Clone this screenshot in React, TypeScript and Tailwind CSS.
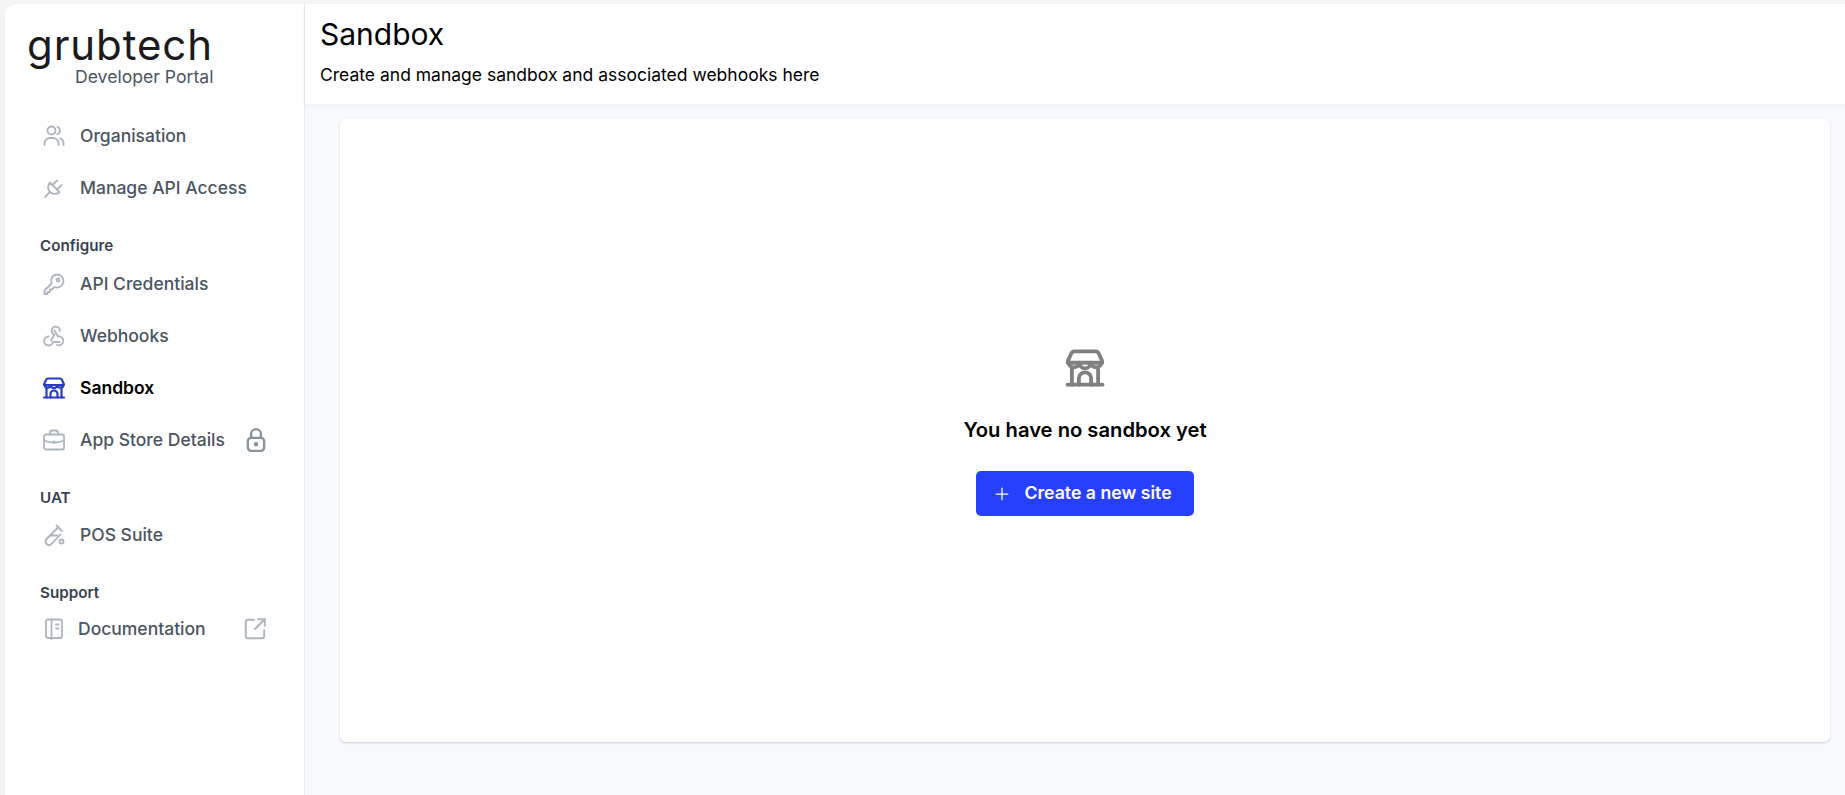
import { ReactNode } from "react";
import { Plus } from "lucide-react";

const stroke = {
  fill: "none",
  stroke: "currentColor",
  strokeWidth: 1.8,
  strokeLinecap: "round" as const,
  strokeLinejoin: "round" as const,
};

function Icon({ children, className }: { children: ReactNode; className?: string }) {
  return (
    <svg viewBox="0 0 24 24" {...stroke} className={className ?? "h-[26px] w-[26px]"}>
      {children}
    </svg>
  );
}

const UsersIcon = () => (
  <Icon>
    <circle cx="9.500" cy="6.500" r="4" />
    <path d="M15.500 2.800a4 4 0 0 1 0 7.400" />
    <path d="M2.500 21v-1.500a5.500 5.500 0 0 1 5.500-5.500h3a5.500 5.500 0 0 1 5.500 5.500V21" />
    <path d="M18 14.300a5 5 0 0 1 3.500 5V21" />
  </Icon>
);

const PlugIcon = () => (
  <Icon>
    <path d="M8 16 3 21" />
    <path d="M8 6.500 17.500 16a6.700 6.700 0 0 1-9.500-9.500z" />
    <path d="M10.500 9 15 4.500" />
    <path d="M15 13.500 19.500 9" />
  </Icon>
);

const KeyIcon = () => (
  <Icon>
    <path d="M15 2.500a6.500 6.500 0 1 1-2.500 12.500L10 17.500H8V20H5.500V22H2.500v-3.500l7-7A6.500 6.500 0 0 1 15 2.500z" />
    <circle cx="16" cy="8" r="1.500" />
  </Icon>
);

const WebhookIcon = () => (
  <Icon>
    <path d="M9 16.500l3.500-6A4 4 0 1 1 17.800 7" />
    <path d="M6.500 12.500A4.500 4.500 0 1 0 11 18h6.500" />
    <path d="M12.500 6.500l3.500 6a4.500 4.500 0 1 1-1 8.500" />
  </Icon>
);

const StoreIcon = ({ className }: { className?: string }) => (
  <svg viewBox="0 0 24 24" fill="none" stroke="currentColor" strokeWidth="2.200" strokeLinecap="round" strokeLinejoin="round" className={className}>
    <path d="M2 21.500h20" />
    <path d="M4.500 12.500v9M19.500 12.500v9" />
    <path d="M6 2.500h12a2 2 0 0 1 1.800 1.100L21.800 8v1H2.200V8l2-4.400A2 2 0 0 1 6 2.500z" />
    <path d="M2.500 9a3.200 3.200 0 0 0 6.300 0 3.200 3.200 0 0 0 6.400 0 3.200 3.200 0 0 0 6.300 0" />
    <path d="M8.500 21.500V18a3.500 3.500 0 0 1 7 0v3.500" />
  </svg>
);

const BriefcaseIcon = () => (
  <Icon>
    <rect x="2" y="6.500" width="20" height="15" rx="2" />
    <path d="M8 6.500V5a2.500 2.500 0 0 1 2.500-2.500h3A2.500 2.500 0 0 1 16 5v1.500" />
    <path d="M2 12.500c3 1.500 6 2 10 2s7-.5 10-2" />
    <path d="M12 13.500v1.500" />
  </Icon>
);

const LockIcon = () => (
  <svg viewBox="0 0 24 24" fill="none" stroke="currentColor" strokeWidth="2.200" strokeLinecap="round" className="h-[26px] w-[26px]">
    <rect x="4.500" y="10" width="15" height="12" rx="3" />
    <path d="M7.500 10V6.500a4.500 4.500 0 0 1 9 0V10" />
    <circle cx="12" cy="16" r="1" fill="currentColor" />
  </svg>
);

const TubeIcon = () => (
  <Icon>
    <path d="M14.500 2.500l5.500 5.500" />
    <path d="M16.500 4 4.500 16a3.500 3.500 0 0 0 5 5L18.500 11.500" />
    <path d="M8 12.500h7.500" />
    <circle cx="19.500" cy="18.500" r="2" />
  </Icon>
);

const BookIcon = () => (
  <Icon>
    <path d="M8 2.500h10a2 2 0 0 1 2 2V19a2 2 0 0 1-2 2h-8.500H6a2 2 0 0 1-2-2V4.500a2 2 0 0 1 2-2z" />
    <path d="M9.500 2.500V22" />
    <path d="M14 7.500h2.500M14 11.500h2.500" />
  </Icon>
);

const ExternalIcon = () => (
  <Icon>
    <path d="M11 3.500H5.500a2 2 0 0 0-2 2v13a2 2 0 0 0 2 2h13a2 2 0 0 0 2-2V13" />
    <path d="M12 12 21 3" />
    <path d="M15 3h6v6" />
  </Icon>
);

function NavItem({ icon, label, active, right, className }: { icon: ReactNode; label: string; active?: boolean; right?: ReactNode; className?: string }) {
  return (
    <div className={`flex h-[52px] items-center ${className ?? ""}`}>
      <span className={`mr-[14px] flex h-6 w-6 shrink-0 items-center justify-center ${active ? "text-[#2a3bc4]" : "text-[#aeb5bd]"}`}>
        {icon}
      </span>
      <span className={`text-[17.500px] ${active ? "font-semibold text-black" : "font-medium text-[#4b5563]"}`}>{label}</span>
      {right}
    </div>
  );
}

function SectionLabel({ children, className }: { children: ReactNode; className?: string }) {
  return <div className={`-ml-[2px] text-[15.200px] leading-5 font-semibold text-[#374151] ${className ?? ""}`}>{children}</div>;
}

export default function App() {
  return (
    <div className="h-[795px] overflow-hidden bg-[#f5f5f6] pt-1 pl-[5px] font-['Inter',sans-serif]">
      <div className="flex h-full">
        <aside className="w-[300px] shrink-0 rounded-tl-xl border-r border-[#e8eaee] bg-white pt-[23px] pl-[37px]">
          <div className="-ml-[15px] text-[42px] leading-9 font-normal tracking-[0.9px] text-[#1c1a1b]">grubtech</div>
          <div className="mt-[4px] pl-[33px] text-[17.600px] leading-5 text-[#4b5563]">Developer Portal</div>
          <NavItem icon={<UsersIcon />} label="Organisation" className="mt-[23px]" />
          <NavItem icon={<PlugIcon />} label="Manage API Access" />
          <SectionLabel className="mt-[22px]">Configure</SectionLabel>
          <NavItem icon={<KeyIcon />} label="API Credentials" className="mt-[2px]" />
          <NavItem icon={<WebhookIcon />} label="Webhooks" />
          <NavItem icon={<StoreIcon className="h-[26px] w-[26px]" />} label="Sandbox" active />
          <NavItem
            icon={<BriefcaseIcon />}
            label="App Store Details"
            right={<span className="ml-[18px] text-[#8b939c]"><LockIcon /></span>}
          />
          <SectionLabel className="mt-[22px]">UAT</SectionLabel>
          <NavItem icon={<TubeIcon />} label="POS Suite" className="mt-[1px]" />
          <SectionLabel className="mt-[22px]">Support</SectionLabel>
          <div className="flex h-[52px] items-center">
            <span className="mr-3 flex h-6 w-6 shrink-0 items-center justify-center text-[#aeb5bd]"><BookIcon /></span>
            <span className="text-[17.500px] font-medium text-[#4b5563]">Documentation</span>
            <span className="ml-[36px] text-[#aeb5bd]"><ExternalIcon /></span>
          </div>
        </aside>
        <div className="flex min-w-0 flex-1 flex-col bg-[#f8f9fd]">
          <header className="h-[100px] bg-white pt-3 pl-[15px] shadow-[0_2px_6px_rgba(30,40,90,0.05)]">
            <h1 className="text-[30px] leading-9 font-normal text-black">Sandbox</h1>
            <p className="mt-[11px] text-[17.500px] leading-6 text-black">Create and manage sandbox and associated webhooks here</p>
          </header>
          <main className="pt-[15px] pr-[15px] pl-[35px]">
            <section className="flex h-[623px] flex-col items-center rounded-md bg-white pt-[228px] shadow-[0_1px_2px_rgba(30,40,70,0.2)]">
              <StoreIcon className="h-[42px] w-[42px] text-[#808080]" />
              <h2 className="mt-[27px] text-[20.200px] leading-7 font-semibold text-black">You have no sandbox yet</h2>
              <button className="mt-[27px] flex h-[45px] w-[218px] items-center justify-center rounded-[5px] bg-[#2740ff] pr-[6px] text-[17.700px] font-semibold text-white">
                <Plus className="mr-[12px] h-5 w-5" strokeWidth={1.5} />
                Create a new site
              </button>
            </section>
          </main>
        </div>
      </div>
    </div>
  );
}
